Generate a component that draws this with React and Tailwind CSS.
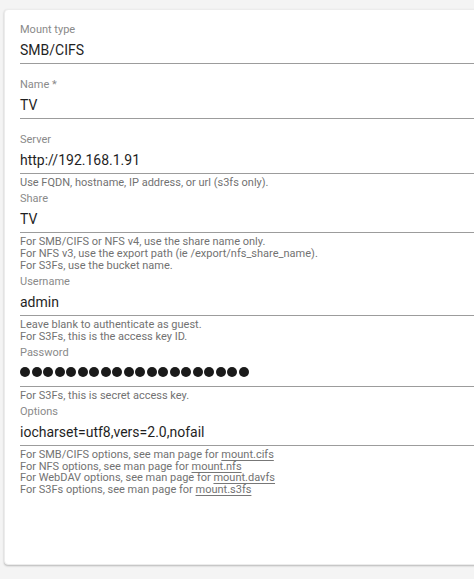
import React from "react";

function Field({ label, value, helper, dots }) {
  return (
    <div className={helper ? "" : "mb-[15px]"}>
      <div className="text-[11px] leading-[12px] text-[#8a8a8a]">{label}</div>
      <div className="border-b border-[#9c9c9c] pt-[4px] pb-[3px]">
        {dots ? (
          <div className="flex h-[20px] items-center gap-[1.5px] pb-[3px]" aria-label="password">
            {Array.from({ length: 20 }).map((_, i) => (
              <span key={i} className="inline-block h-[10px] w-[10px] rounded-full bg-[#1a1a1a]" />
            ))}
          </div>
        ) : (
          <div className="text-[14px] leading-[20px] text-[#1f1f1f]">{value}</div>
        )}
      </div>
      {helper && (
        <div className="mt-[3px] mb-[4px] text-[11px] leading-[12px] text-[#727272]">
          {helper}
        </div>
      )}
    </div>
  );
}

function L({ children }) {
  return <span className="underline underline-offset-[2px] decoration-[#777]">{children}</span>;
}

export default function App() {
  return (
    <div className="min-h-[579px] w-[474px] overflow-hidden bg-[#f4f4f4] pt-[9px] pl-[4px] pb-[14px] font-['Roboto',sans-serif]">
      <div className="h-[556px] w-[490px] rounded-[4px] bg-white shadow-[0_1px_2px_rgba(0,0,0,0.25)] border border-[#ececec] pl-[15px] pt-[14px]">
        <Field label="Mount type" value="SMB/CIFS" />
        <Field label="Name *" value="TV" />
        <Field
          label="Server"
          value="http://192.168.1.91"
          helper="Use FQDN, hostname, IP address, or url (s3fs only)."
        />
        <Field
          label="Share"
          value="TV"
          helper={
            <>
              <div>For SMB/CIFS or NFS v4, use the share name only.</div>
              <div>For NFS v3, use the export path (ie /export/nfs_share_name).</div>
              <div>For S3Fs, use the bucket name.</div>
            </>
          }
        />
        <Field
          label="Username"
          value="admin"
          helper={
            <>
              <div>Leave blank to authenticate as guest.</div>
              <div>For S3Fs, this is the access key ID.</div>
            </>
          }
        />
        <Field label="Password" dots helper="For S3Fs, this is secret access key." />
        <Field
          label="Options"
          value="iocharset=utf8,vers=2.0,nofail"
          helper={
            <div className="leading-[11.5px]">
              <div>For SMB/CIFS options, see man page for <L>mount.cifs</L></div>
              <div>For NFS options, see man page for <L>mount.nfs</L></div>
              <div>For WebDAV options, see man page for <L>mount.davfs</L></div>
              <div>For S3Fs options, see man page for <L>mount.s3fs</L></div>
            </div>
          }
        />
      </div>
    </div>
  );
}
